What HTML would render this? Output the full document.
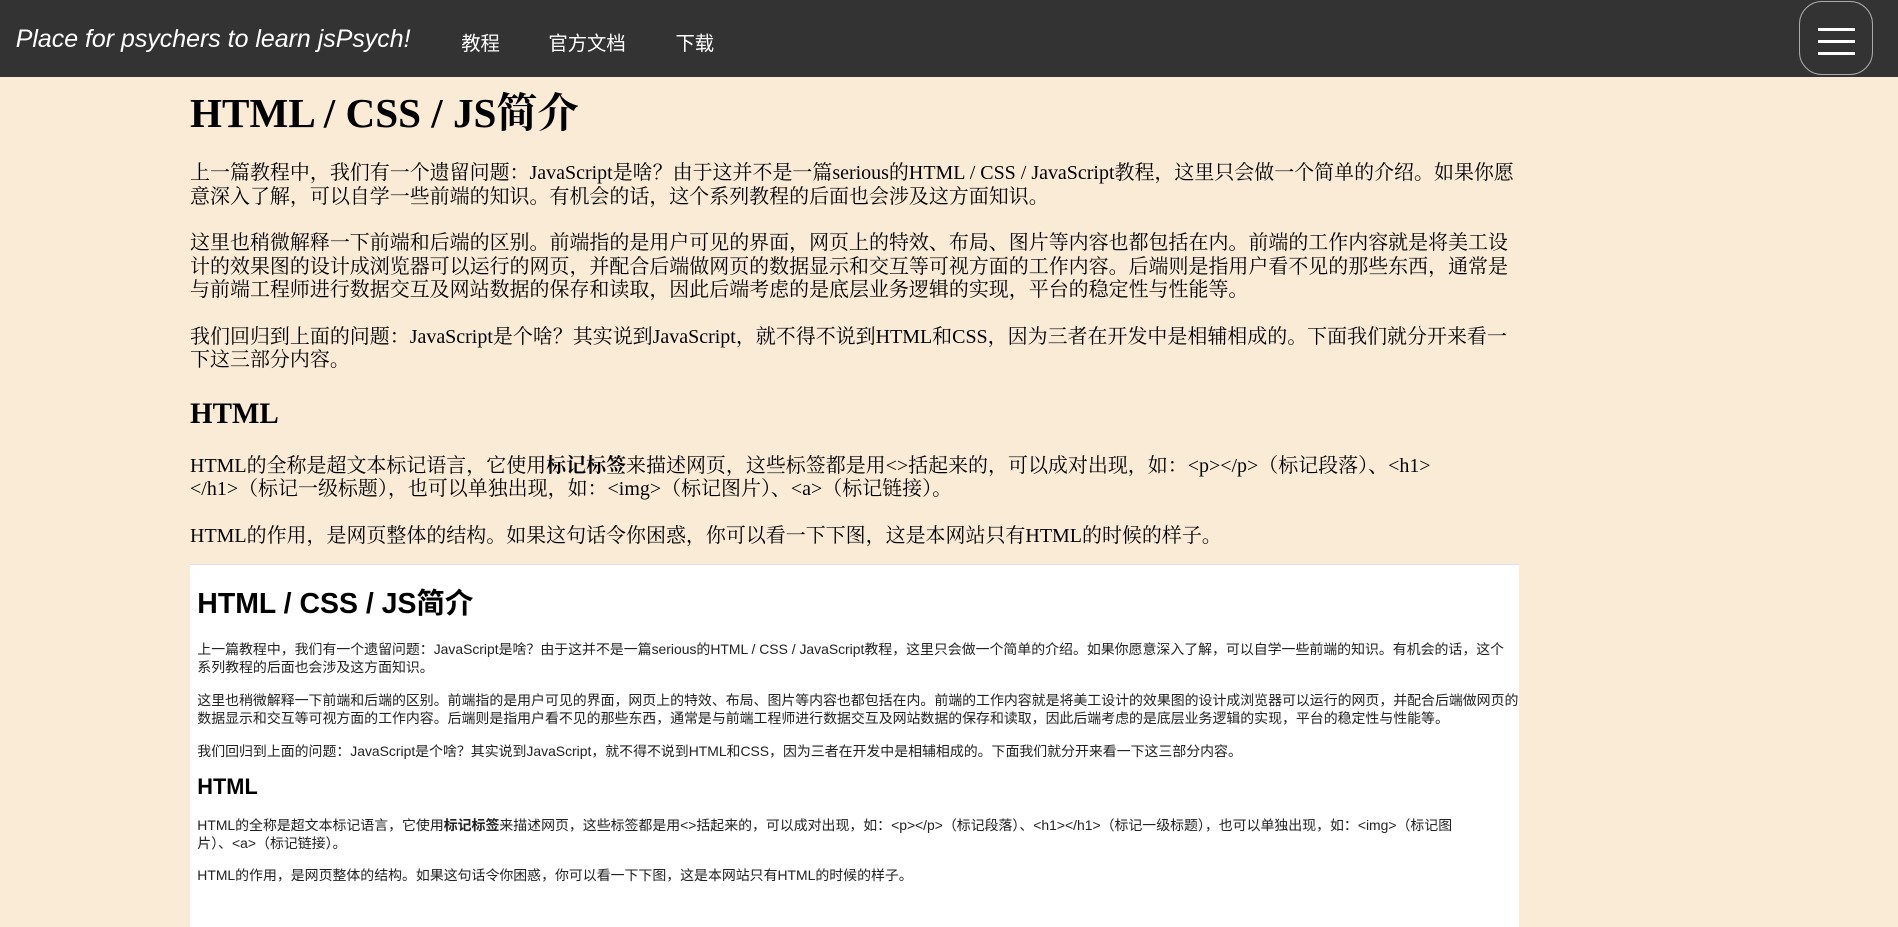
<!DOCTYPE html>
<html><head><meta charset="utf-8">
<style>
html{zoom:1.2105;}
*{box-sizing:border-box;}
body{margin:0;background:#faebd7;font-family:"Liberation Serif","Noto Serif CJK SC",serif;color:#000;width:1568px;height:744px;overflow:hidden;}
.hdr{height:64px;background:#333;position:relative;color:#fff;}
.title{position:absolute;left:13px;top:21px;font:italic 20.6px "Liberation Sans",sans-serif;white-space:nowrap;}
.nav{position:absolute;top:23px;font:16px "Liberation Sans","Noto Sans CJK SC",sans-serif;white-space:nowrap;}
.btn{position:absolute;left:1486px;top:1px;width:61px;height:61px;border:1px solid #aaa;border-radius:19px;}
.btn i{position:absolute;left:15px;width:31px;height:2.5px;background:#fff;}
.main{position:absolute;left:157px;top:64px;width:1098px;}
h1{font-size:34px;line-height:46px;margin:7px 0 17px;font-weight:bold;white-space:nowrap;}
p{font-size:16.5px;line-height:19.3px;margin:0 0 19.3px;white-space:nowrap;}
h2{font-size:24px;line-height:28px;margin:21px 0 19px;}
.shot{position:absolute;left:157px;top:466px;width:1098px;height:300px;background:#fff;border-top:1.5px solid #dde0e6;padding:0 6px;font-family:"Liberation Sans","Noto Sans CJK SC",sans-serif;color:#222;}
.shot h1{font-size:23.5px;line-height:30px;margin:17px 0 15px;color:#000;}
.shot p{font-size:11.5px;line-height:15px;margin:0 0 12px;}
.shot h2{font-size:18px;line-height:22px;margin:6px 0 12px;color:#000;}
</style></head><body>
<div class="hdr">
<div class="title">Place for psychers to learn jsPsych!</div>
<div class="nav" style="left:381px">教程</div>
<div class="nav" style="left:453px">官方文档</div>
<div class="nav" style="left:558px">下载</div>
<div class="btn"><i style="top:21px"></i><i style="top:31px"></i><i style="top:41px"></i></div>
</div>
<div class="main">
<h1>HTML / CSS / JS简介</h1>
<p>上一篇教程中，我们有一个遗留问题：JavaScript是啥？由于这并不是一篇serious的HTML / CSS / JavaScript教程，这里只会做一个简单的介绍。如果你愿<br>意深入了解，可以自学一些前端的知识。有机会的话，这个系列教程的后面也会涉及这方面知识。</p>
<p>这里也稍微解释一下前端和后端的区别。前端指的是用户可见的界面，网页上的特效、布局、图片等内容也都包括在内。前端的工作内容就是将美工设<br>计的效果图的设计成浏览器可以运行的网页，并配合后端做网页的数据显示和交互等可视方面的工作内容。后端则是指用户看不见的那些东西，通常是<br>与前端工程师进行数据交互及网站数据的保存和读取，因此后端考虑的是底层业务逻辑的实现，平台的稳定性与性能等。</p>
<p>我们回归到上面的问题：JavaScript是个啥？其实说到JavaScript，就不得不说到HTML和CSS，因为三者在开发中是相辅相成的。下面我们就分开来看一<br>下这三部分内容。</p>
<h2>HTML</h2>
<p>HTML的全称是超文本标记语言，它使用<b>标记标签</b>来描述网页，这些标签都是用&lt;&gt;括起来的，可以成对出现，如：&lt;p&gt;&lt;/p&gt;（标记段落）、&lt;h1&gt;<br>&lt;/h1&gt;（标记一级标题），也可以单独出现，如：&lt;img&gt;（标记图片）、&lt;a&gt;（标记链接）。</p>
<p>HTML的作用，是网页整体的结构。如果这句话令你困惑，你可以看一下下图，这是本网站只有HTML的时候的样子。</p>
</div>
<div class="shot">
<h1>HTML / CSS / JS简介</h1>
<p>上一篇教程中，我们有一个遗留问题：JavaScript是啥？由于这并不是一篇serious的HTML / CSS / JavaScript教程，这里只会做一个简单的介绍。如果你愿意深入了解，可以自学一些前端的知识。有机会的话，这个<br>系列教程的后面也会涉及这方面知识。</p>
<p>这里也稍微解释一下前端和后端的区别。前端指的是用户可见的界面，网页上的特效、布局、图片等内容也都包括在内。前端的工作内容就是将美工设计的效果图的设计成浏览器可以运行的网页，并配合后端做网页的<br>数据显示和交互等可视方面的工作内容。后端则是指用户看不见的那些东西，通常是与前端工程师进行数据交互及网站数据的保存和读取，因此后端考虑的是底层业务逻辑的实现，平台的稳定性与性能等。</p>
<p>我们回归到上面的问题：JavaScript是个啥？其实说到JavaScript，就不得不说到HTML和CSS，因为三者在开发中是相辅相成的。下面我们就分开来看一下这三部分内容。</p>
<h2>HTML</h2>
<p>HTML的全称是超文本标记语言，它使用<b>标记标签</b>来描述网页，这些标签都是用&lt;&gt;括起来的，可以成对出现，如：&lt;p&gt;&lt;/p&gt;（标记段落）、&lt;h1&gt;&lt;/h1&gt;（标记一级标题），也可以单独出现，如：&lt;img&gt;（标记图<br>片）、&lt;a&gt;（标记链接）。</p>
<p>HTML的作用，是网页整体的结构。如果这句话令你困惑，你可以看一下下图，这是本网站只有HTML的时候的样子。</p>
</div>
</body></html>
